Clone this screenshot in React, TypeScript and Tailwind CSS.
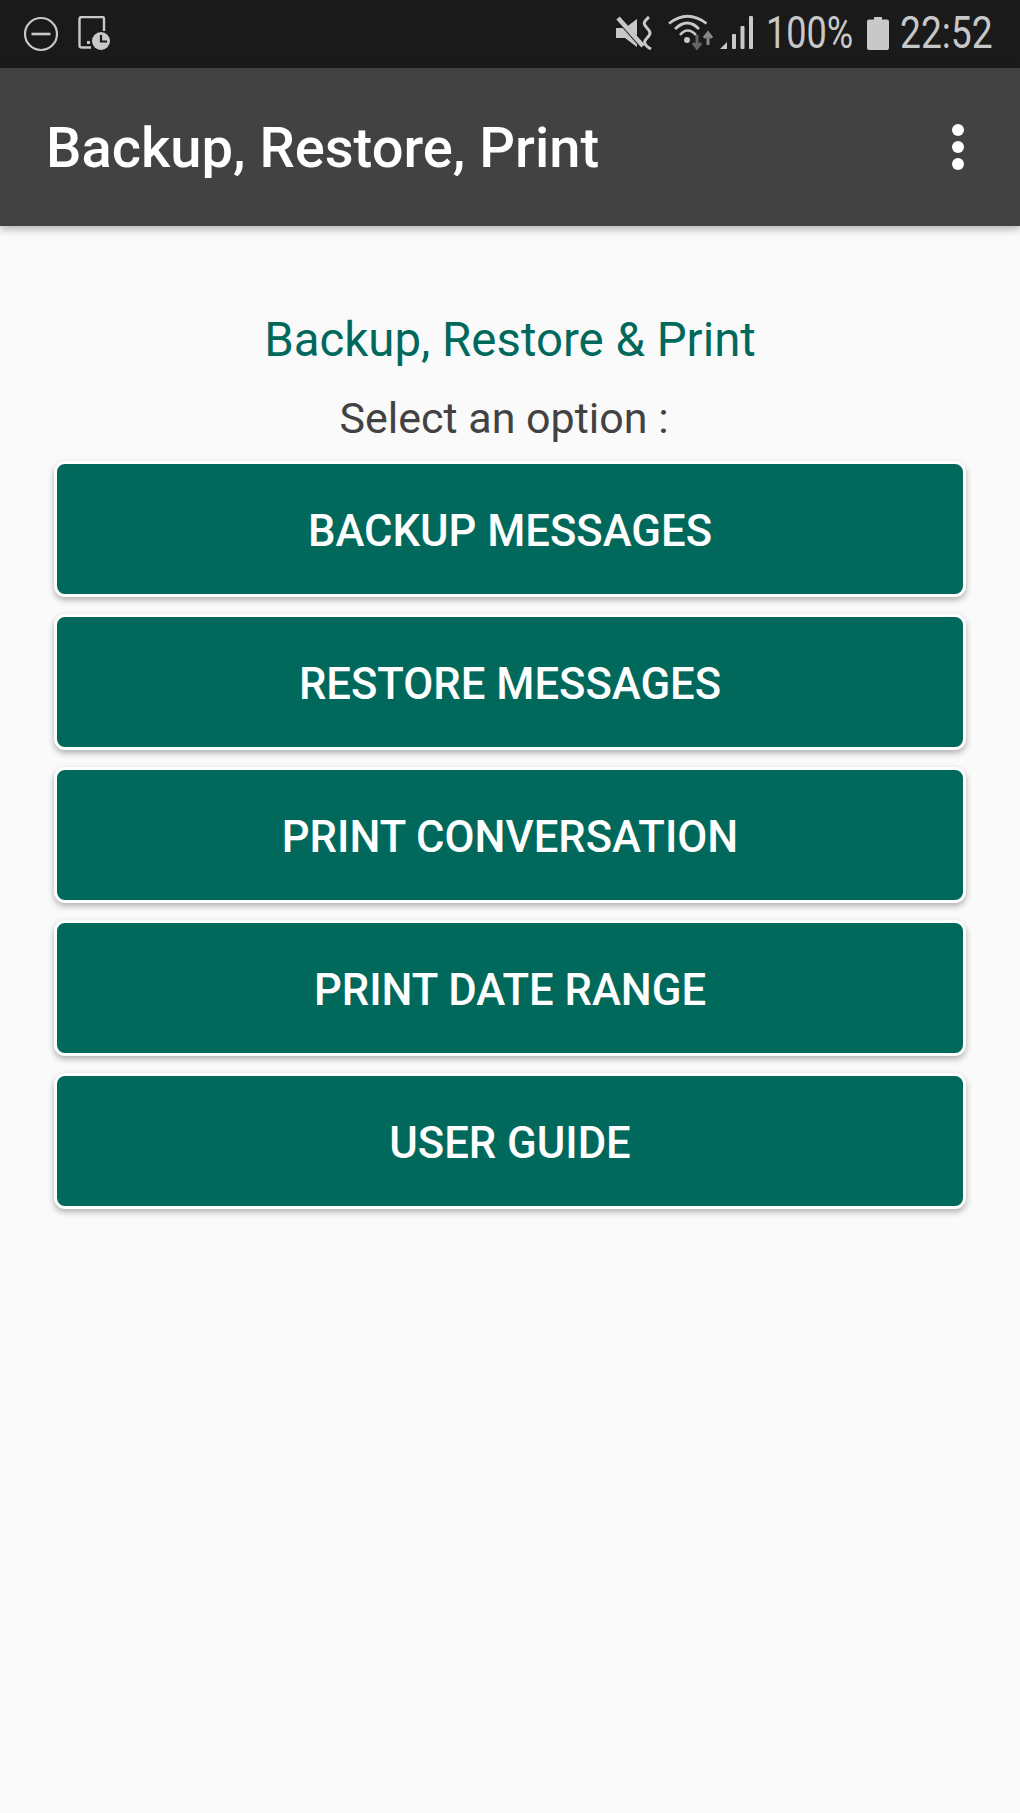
const options = ['BACKUP MESSAGES', 'RESTORE MESSAGES', 'PRINT CONVERSATION', 'PRINT DATE RANGE', 'USER GUIDE'];

function StatusLeft() {
  return (
    <div className="flex items-center gap-[19px] pb-[1px]">
      <svg width="36" height="36" viewBox="0 0 36 36" fill="none" stroke="#c8c8c8">
        <circle cx="18" cy="18" r="16" strokeWidth="2.2" />
        <path d="M8.5 18H27.5" strokeWidth="2.6" />
      </svg>
      <svg width="33" height="36" viewBox="0 0 33 36" fill="none">
        <path d="M13 31.5H4Q1.5 31.5 1.5 29.5V3Q1.5 1 4 1H24.5Q26 1 26 3V15" stroke="#c8c8c8" strokeWidth="2.4" />
        <rect x="9" y="25" width="3" height="3" fill="#c8c8c8" />
        <circle cx="23" cy="25" r="9" fill="#c8c8c8" />
        <path d="M23 19V25.5H29" stroke="#1a1a1a" strokeWidth="2.2" />
      </svg>
    </div>
  );
}

function StatusRight() {
  return (
    <div className="flex items-center text-[#c8c8c8]">
      <svg width="38" height="36" viewBox="0 0 38 36" className="mr-[14px]" fill="#c8c8c8">
        <path d="M0 12H9L21 3V31L9 22H0Z" />
        <path d="M3 4L27 31" stroke="#1a1a1a" strokeWidth="5" />
        <path d="M2 2L27 30" stroke="#c8c8c8" strokeWidth="4.5" />
        <path d="M33 1C27 6 27 8 31 12C35 16 35 18 31 22C27 26 28 29 35 33" fill="none" stroke="#c8c8c8" strokeWidth="3" />
      </svg>
      <svg width="46" height="36" viewBox="0 0 46 36" fill="none" className="mr-[5px] overflow-visible">
        <path d="M1 7.5Q19.5 -7 38.5 7.5" stroke="#c8c8c8" strokeWidth="2.8" />
        <path d="M7 13Q19.5 1 31 13" stroke="#c8c8c8" strokeWidth="2.8" />
        <path d="M12 19Q19.5 10 28 19" stroke="#c8c8c8" strokeWidth="2.6" />
        <circle cx="19" cy="24" r="3" fill="#c8c8c8" />
        <path d="M29 19V32M25 27L29 32L33 27" stroke="#666" strokeWidth="3" />
        <path d="M40 29V17M36 22L40 17L44 22" stroke="#888" strokeWidth="3" />
      </svg>
      <svg width="36" height="36" viewBox="0 0 36 36" fill="#c8c8c8" className="mr-[11px]">
        <path d="M1 33L8 26V33Z" />
        <rect x="13" y="18" width="4" height="15" rx="1" />
        <rect x="21.5" y="10" width="4" height="23" rx="1" />
        <rect x="30" y="0" width="4" height="33" rx="1" />
      </svg>
      <span className="text-[43.5px] leading-none w-[88px] origin-left scale-x-[0.83] whitespace-nowrap">100%</span>
      <svg width="24" height="36" viewBox="0 0 24 36" fill="#c8c8c8" className="ml-[12px] mr-[10px]">
        <path d="M8 1H16V3.5H21Q23 3.5 23 5.5V32Q23 34 21 34H3Q1 34 1 32V5.5Q1 3.5 3 3.5H8Z" />
      </svg>
      <span className="text-[43.5px] leading-none w-[93px] origin-left scale-x-[0.855] whitespace-nowrap">22:52</span>
    </div>
  );
}

export default function App() {
  return (
    <div className="min-h-[1813px] bg-[#fafafa] font-['Roboto',sans-serif]">
      <div className="h-[68px] bg-[#1a1a1a] flex items-center justify-between pl-[23px] pr-[27px]">
        <StatusLeft />
        <StatusRight />
      </div>
      <div className="h-[158px] bg-[#424242] flex items-center justify-between pl-[46px] pr-[56px] shadow-[0_3px_8px_rgba(0,0,0,0.3)] relative">
        <span className="text-white text-[56.1px] font-medium leading-none pt-[2px]">Backup, Restore, Print</span>
        <div className="flex flex-col gap-[5px]">
          <div className="w-[12px] h-[12px] rounded-full bg-white" />
          <div className="w-[12px] h-[12px] rounded-full bg-white" />
          <div className="w-[12px] h-[12px] rounded-full bg-white" />
        </div>
      </div>
      <div className="px-[54px] pt-[87px]">
        <div className="text-center text-[#00695c] text-[47.4px] leading-[54px]">Backup, Restore &amp; Print</div>
        <div className="text-center text-[#424242] text-[43px] leading-[50px] mt-[26px] pr-[12px]">Select an option :</div>
        <div className="mt-[18px] flex flex-col gap-[17px]">
          {options.map((o) => (
            <div
              key={o}
              className="h-[136px] bg-[#00695c] border-[3px] border-white rounded-[11px] flex items-center justify-center pt-[6px] text-white text-[43.6px] font-medium shadow-[0_3px_6px_rgba(0,0,0,0.3)]"
            >
              {o}
            </div>
          ))}
        </div>
      </div>
    </div>
  );
}
